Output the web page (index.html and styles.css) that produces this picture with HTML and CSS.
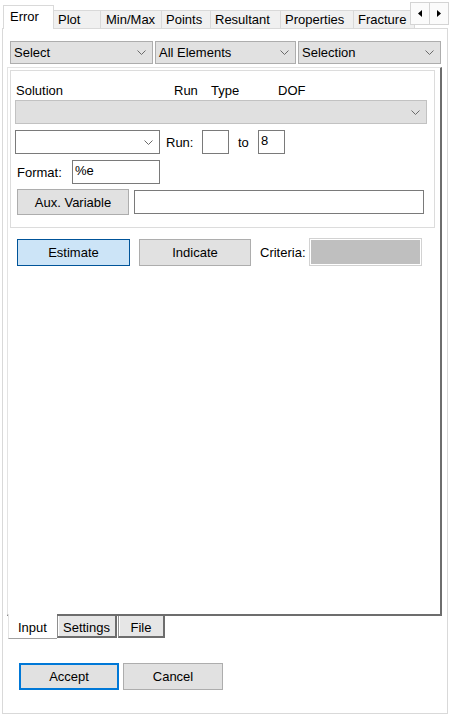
FILE: index.html
```html
<!DOCTYPE html>
<html>
<head>
<meta charset="utf-8">
<link rel="stylesheet" href="styles.css">
</head>
<body>
<div class="window">
  <div class="tabstrip">
    <div class="tab active w-error">Error</div>
    <div class="tab w-plot">Plot</div>
    <div class="tab w-minmax">Min/Max</div>
    <div class="tab w-points">Points</div>
    <div class="tab w-result">Resultant</div>
    <div class="tab w-props">Properties</div>
    <div class="tab w-fract">Fracture</div>
    <div class="tabscroll">
      <div class="sbtn"><svg width="4" height="7" viewBox="0 0 4 7"><polygon points="4,0 4,7 0,3.5" fill="#000"/></svg></div>
      <div class="sbtn"><svg width="4" height="7" viewBox="0 0 4 7"><polygon points="0,0 0,7 4,3.5" fill="#000"/></svg></div>
    </div>
  </div>
  <div class="page">
    <div class="toprow">
      <div class="combo gray w143"><span>Select</span><svg class="chev" width="9" height="5" viewBox="0 0 9 5"><polyline points="0.5,0.5 4.5,4.5 8.5,0.5" fill="none" stroke="#6a6a6a"/></svg></div>
      <div class="combo gray w141"><span>All Elements</span><svg class="chev" width="9" height="5" viewBox="0 0 9 5"><polyline points="0.5,0.5 4.5,4.5 8.5,0.5" fill="none" stroke="#6a6a6a"/></svg></div>
      <div class="combo gray w143"><span>Selection</span><svg class="chev" width="9" height="5" viewBox="0 0 9 5"><polyline points="0.5,0.5 4.5,4.5 8.5,0.5" fill="none" stroke="#6a6a6a"/></svg></div>
    </div>
    <div class="inner">
      <div class="group">
        <div class="hdr">
          <span class="h-sol">Solution</span>
          <span class="h-run">Run</span>
          <span class="h-type">Type</span>
          <span class="h-dof">DOF</span>
        </div>
        <div class="solbar"><svg class="chev" width="9" height="5" viewBox="0 0 9 5"><polyline points="0.5,0.5 4.5,4.5 8.5,0.5" fill="none" stroke="#6a6a6a"/></svg></div>
        <div class="row row2">
          <div class="combo white w145"><span></span><svg class="chev" width="9" height="5" viewBox="0 0 9 5"><polyline points="0.5,0.5 4.5,4.5 8.5,0.5" fill="none" stroke="#6a6a6a"/></svg></div>
          <span class="lbl lbl-run">Run:</span>
          <div class="input small"></div>
          <span class="lbl lbl-to">to</span>
          <div class="input small">8</div>
        </div>
        <div class="row row3">
          <span class="lbl lbl-format">Format:</span>
          <div class="input fmt">%e</div>
        </div>
        <div class="row row4">
          <div class="btn aux">Aux. Variable</div>
          <div class="input auxin"></div>
        </div>
      </div>
      <div class="row estrow">
        <div class="btn estimate">Estimate</div>
        <div class="btn indicate">Indicate</div>
        <span class="lbl lbl-crit">Criteria:</span>
        <div class="critbox"><div class="critfill"></div></div>
      </div>
    </div>
    <div class="btabs">
      <div class="btab active">Input</div>
      <div class="btab settings">Settings</div>
      <div class="btab file">File</div>
    </div>
    <div class="actions">
      <div class="btn accept">Accept</div>
      <div class="btn cancel">Cancel</div>
    </div>
  </div>
</div>
</body>
</html>
```

FILE: styles.css
```css
* { box-sizing: border-box; }

body {
  margin: 0;
  background: #ffffff;
  font-family: "Liberation Sans", Arial, sans-serif;
  font-size: 13px;
  color: #000000;
}

.window {
  position: relative;
  width: 446px;
  margin-left: 2px;
}

/* top tabs */
.tabstrip {
  display: flex;
  align-items: flex-end;
  height: 28px;
  padding-left: 1px;
  position: relative;
}

.tab {
  flex: none;
  height: 18px;
  margin-left: -1px;
  border: 1px solid #d9d9d9;
  border-bottom: none;
  background: #f0f0f0;
  padding: 1px 0 0 4px;
  line-height: 15px;
  white-space: nowrap;
  overflow: hidden;
}

.tab.active {
  position: relative;
  z-index: 2;
  height: 24px;
  margin-left: 0;
  margin-bottom: -1px;
  background: #ffffff;
  padding: 3px 0 0 6px;
}

.w-error { width: 51px; }
.w-plot { width: 48px; }
.w-minmax { width: 62px; padding-left: 5px; }
.w-points { width: 50px; }
.w-result { width: 71px; }
.w-props { width: 74px; }
.w-fract { width: 62px; }

.tabscroll {
  position: absolute;
  left: 408px;
  top: 2px;
  display: flex;
  z-index: 3;
  background: #ffffff;
}

.sbtn {
  width: 20px;
  height: 23px;
  border: 1px solid #d4d4d4;
  background: #fbfbfb;
  display: flex;
  align-items: center;
  justify-content: center;
}

.sbtn + .sbtn { margin-left: -1px; }

/* page */
.page {
  border: 1px solid #d9d9d9;
  height: 686px;
  padding-top: 12px;
}

.toprow {
  display: flex;
  gap: 2px;
  margin-left: 7px;
}

.combo {
  display: flex;
  align-items: center;
  justify-content: space-between;
  height: 23px;
  padding: 0 6px 0 3px;
  white-space: nowrap;
}

.combo.gray {
  background: #e1e1e1;
  border: 1px solid #adadad;
}

.combo.white {
  background: #ffffff;
  border: 1px solid #7a7a7a;
  height: 24px;
}

.w143 { width: 143px; }
.w141 { width: 141px; }
.w145 { width: 145px; }

.chev { flex: none; }

.inner {
  margin: 3px 0 0 4px;
  width: 435px;
  height: 549px;
  border-left: 1px solid #e3e3e3;
  border-top: 1px solid #e3e3e3;
  border-right: 2px solid #6d6d6d;
  border-bottom: 2px solid #6d6d6d;
}

.group {
  margin: 2px 0 0 2px;
  width: 425px;
  height: 158px;
  border: 1px solid #dcdcdc;
}

.hdr {
  display: flex;
  margin-top: 12px;
  height: 16px;
  line-height: 16px;
  padding-left: 5px;
}

.h-sol { width: 158px; }
.h-run { width: 37px; }
.h-type { width: 67px; }

.solbar {
  margin: 1px 0 0 4px;
  width: 412px;
  height: 24px;
  background: #e0e0e0;
  border: 1px solid #c2c2c2;
  display: flex;
  align-items: center;
  justify-content: flex-end;
  padding-right: 6px;
}

.row {
  display: flex;
  align-items: center;
}

.row2 {
  margin: 6px 0 0 4px;
  height: 24px;
}

.lbl { white-space: nowrap; }

.lbl-run { width: 36px; margin-left: 6px; }
.lbl-to { width: 20px; margin-left: 9px; }

.input {
  height: 24px;
  border: 1px solid #7a7a7a;
  background: #ffffff;
  line-height: 20px;
  padding-left: 2px;
}

.input.small { width: 27px; }

.row3 {
  margin: 6px 0 0 6px;
  height: 24px;
}

.lbl-format { width: 55px; }

.input.fmt { width: 88px; }

.row4 {
  margin: 5px 0 0 6px;
  height: 26px;
}

.btn {
  display: flex;
  align-items: center;
  justify-content: center;
  white-space: nowrap;
}

.btn.aux {
  width: 112px;
  height: 26px;
  background: #e1e1e1;
  border: 1px solid #adadad;
}

.input.auxin {
  width: 290px;
  margin-left: 5px;
}

.estrow {
  margin: 10px 0 0 9px;
  height: 28px;
}

.btn.estimate {
  width: 113px;
  height: 27px;
  background: #cce4f7;
  border: 1px solid #005499;
}

.btn.indicate {
  width: 112px;
  height: 27px;
  margin-left: 9px;
  background: #e1e1e1;
  border: 1px solid #adadad;
}

.lbl-crit { width: 49px; margin-left: 9px; }

.critbox {
  width: 113px;
  height: 28px;
  border: 1px solid #d2d2d2;
  padding: 1px;
  background: #ffffff;
}

.critfill {
  width: 100%;
  height: 100%;
  background: #bfbfbf;
}

/* bottom tabs */
.btabs {
  display: flex;
  margin-left: 5px;
  align-items: flex-start;
}

.btab {
  white-space: nowrap;
  display: flex;
  align-items: center;
}

.btab.active {
  width: 49px;
  height: 25px;
  margin-top: -2px;
  background: #ffffff;
  border-left: 1px solid #e3e3e3;
  border-bottom: 1px solid #a0a0a0;
  padding: 2px 0 0 9px;
  position: relative;
}

.btab.settings,
.btab.file {
  height: 22px;
  padding-top: 2px;
  background: #e6e6e6;
  border-left: 1px solid #8f8f8f;
  border-right: 2px solid #6d6d6d;
  border-bottom: 2px solid #6d6d6d;
  box-shadow: inset 1px 0 #ffffff;
  justify-content: center;
}

.btab.settings { width: 60px; }
.btab.file { width: 47px; margin-left: 1px; }

.actions {
  display: flex;
  margin: 24px 0 0 16px;
}

.btn.accept {
  width: 100px;
  height: 27px;
  background: #e1e1e1;
  border: 2px solid #0078d7;
}

.btn.cancel {
  width: 100px;
  height: 27px;
  margin-left: 4px;
  background: #e1e1e1;
  border: 1px solid #adadad;
}
```
